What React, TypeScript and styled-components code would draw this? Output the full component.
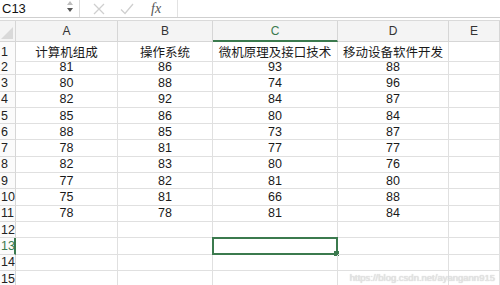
import styled, { createGlobalStyle } from 'styled-components';

const GlobalStyle = createGlobalStyle`
  html, body {
    margin: 0;
    padding: 0;
    background: #ffffff;
  }
  body {
    font-family: "Liberation Sans", "Noto Sans CJK SC", sans-serif;
  }
`;

const COLS = ['A', 'B', 'C', 'D', 'E'];
const TEMPLATE = '16px 102px 95px 125px 111px 1fr';
const ACTIVE_COL = 2;
const ACTIVE_ROW = 13;
const GREEN = '#3b7a4e';

const rows: string[][] = [
  ['计算机组成', '操作系统', '微机原理及接口技术', '移动设备软件开发'],
  ['81', '86', '93', '88'],
  ['80', '88', '74', '96'],
  ['82', '92', '84', '87'],
  ['85', '86', '80', '84'],
  ['88', '85', '73', '87'],
  ['78', '81', '77', '77'],
  ['82', '83', '80', '76'],
  ['77', '82', '81', '80'],
  ['75', '81', '66', '88'],
  ['78', '78', '81', '84'],
  [],
  [],
  [],
  [],
];

const Page = styled.div`
  position: relative;
  width: 500px;
  height: 285px;
  overflow: hidden;
  background: #fff;
`;

const FormulaBar = styled.div`
  display: flex;
  align-items: center;
  height: 17px;
  border-bottom: 1px solid #cfcfcf;
  margin-bottom: 2px;
`;

const NameBox = styled.div`
  display: flex;
  align-items: center;
  justify-content: space-between;
  width: 80px;
  height: 100%;
  padding: 0 6px 0 2px;
  box-sizing: border-box;
  border-right: 1px solid #dcdcdc;
  font-size: 13px;
  color: #111;
`;

const Stepper = styled.div`
  display: flex;
  flex-direction: column;
  gap: 3px;
  margin-top: -4px;
`;

const Arrow = styled.div<{ $down?: boolean }>`
  width: 0;
  height: 0;
  border-left: 3px solid transparent;
  border-right: 3px solid transparent;
  ${(p) =>
    p.$down
      ? 'border-top: 4px solid #555;'
      : 'border-bottom: 4px solid #bdbdbd;'}
`;

const Tools = styled.div`
  display: flex;
  align-items: center;
  gap: 15px;
  width: 98px;
  height: 100%;
  padding-left: 13px;
  box-sizing: border-box;
  border-right: 1px solid #e2e2e2;
`;

const Fx = styled.span`
  font-family: "Liberation Serif", serif;
  font-style: italic;
  font-size: 14px;
  color: #555;
  margin-left: 2px;
`;

const Grid = styled.div`
  display: grid;
  grid-template-columns: ${TEMPLATE};
`;

const HeaderRow = styled(Grid)`
  height: 22px;
  border-top: 1px solid #dadada;
  background: #f4f4f4;
  box-sizing: border-box;
`;

const Corner = styled.div`
  position: relative;
  border-right: 1px solid #d6d6d6;
  border-bottom: 1px solid #d6d6d6;
  &::after {
    content: '';
    position: absolute;
    right: 2px;
    bottom: 2px;
    width: 0;
    height: 0;
    border-left: 12px solid transparent;
    border-bottom: 12px solid #d9d9d9;
  }
`;

const ColHead = styled.div<{ $active?: boolean }>`
  display: flex;
  align-items: center;
  justify-content: center;
  font-size: 12px;
  color: ${(p) => (p.$active ? GREEN : '#333')};
  border-right: 1px solid #d6d6d6;
  border-bottom: ${(p) => (p.$active ? `2px solid ${GREEN}` : '1px solid #d6d6d6')};
`;

const Row = styled(Grid)<{ $h: number }>`
  height: ${(p) => p.$h}px;
`;

const RowHead = styled.div<{ $active?: boolean }>`
  display: flex;
  align-items: center;
  padding-left: 1px;
  font-size: 12.5px;
  background: #fbfbfb;
  color: ${(p) => (p.$active ? GREEN : '#222')};
  border-right: ${(p) => (p.$active ? `2px solid ${GREEN}` : '1px solid #d6d6d6')};
  border-bottom: 1px solid #dcdcdc;
  overflow: hidden;
  white-space: nowrap;
`;

const Cell = styled.div<{ $selected?: boolean }>`
  position: relative;
  display: flex;
  align-items: center;
  justify-content: center;
  font-size: 12.5px;
  color: #1a1a1a;
  white-space: nowrap;
  border-right: 1px solid #e0e0e0;
  border-bottom: 1px solid #e0e0e0;
  ${(p) =>
    p.$selected &&
    `
    &::before {
      content: '';
      position: absolute;
      left: -1px;
      top: -1px;
      right: -1px;
      bottom: -1px;
      border: 2px solid ${GREEN};
    }
    &::after {
      content: '';
      position: absolute;
      right: -2px;
      bottom: -2px;
      width: 5px;
      height: 5px;
      background: ${GREEN};
    }
  `}
`;

const Watermark = styled.div`
  position: absolute;
  right: 5px;
  bottom: 2px;
  font-size: 9.5px;
  color: #e6e6e6;
  text-shadow: 0 0 1px #b8b8b8;
  white-space: nowrap;
`;

export default function App() {
  return (
    <Page>
      <GlobalStyle />
      <FormulaBar>
        <NameBox>
          C13
          <Stepper>
            <Arrow />
            <Arrow $down />
          </Stepper>
        </NameBox>
        <Tools>
          <svg width="12" height="12" viewBox="0 0 12 12">
            <path d="M1 1L11 11M11 1L1 11" stroke="#cfcfcf" strokeWidth="1.3" fill="none" />
          </svg>
          <svg width="14" height="12" viewBox="0 0 14 12">
            <path d="M1 6.5L5 10.5L13 1" stroke="#cfcfcf" strokeWidth="1.3" fill="none" />
          </svg>
          <Fx>fx</Fx>
        </Tools>
      </FormulaBar>
      <HeaderRow>
        <Corner />
        {COLS.map((c, i) => (
          <ColHead key={c} $active={i === ACTIVE_COL}>
            {c}
          </ColHead>
        ))}
      </HeaderRow>
      {rows.map((r, idx) => {
        const n = idx + 1;
        return (
          <Row key={n} $h={n === 1 ? 17 : 16.3}>
            <RowHead $active={n === ACTIVE_ROW}>{n}</RowHead>
            {COLS.map((c, i) => (
              <Cell key={c} $selected={n === ACTIVE_ROW && i === ACTIVE_COL}>
                {r[i] ?? ''}
              </Cell>
            ))}
          </Row>
        );
      })}
      <Watermark>https://blog.csdn.net/ayangann915</Watermark>
    </Page>
  );
}
